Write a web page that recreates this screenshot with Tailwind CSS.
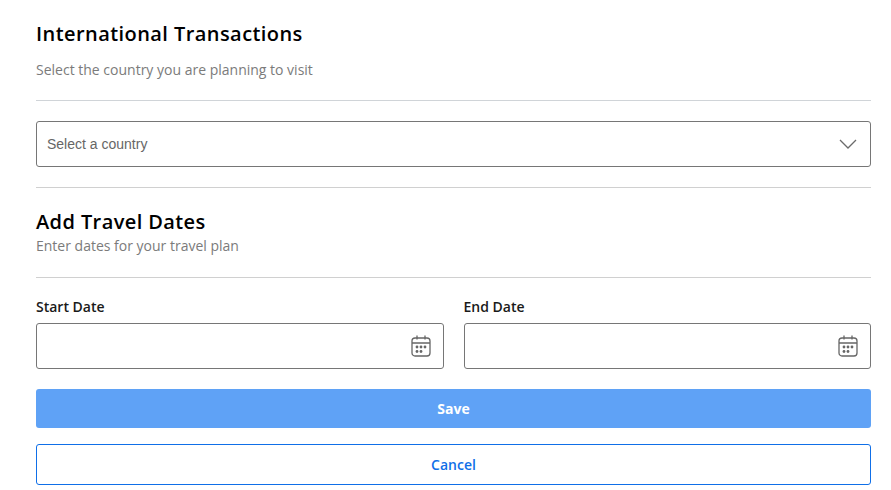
<!DOCTYPE html>
<html lang="en">
<head>
    <meta charset="UTF-8">
    <meta name="viewport" content="width=device-width, initial-scale=1.0">
    <title>International Transactions</title>
    <script src="https://cdn.jsdelivr.net/npm/@tailwindcss/browser@4"></script>
</head>
<body class="bg-white h-[490px] overflow-hidden font-['Open_Sans',sans-serif]">

    <div class="pl-9 pr-5 pt-5">

        <!-- Country -->
        <h2 class="text-xl leading-[28px] font-[550] tracking-[0.43px] text-black">International Transactions</h2>
        <p class="mt-[13px] text-sm leading-[18px] text-[#7b7b7b]">Select the country you are planning to visit</p>
        <div class="mt-[21px] h-px bg-[#d0d4d8]"></div>

        <div class="mt-5 h-[46px] flex items-center justify-between border border-[#767676] rounded-[3px] pl-[10px] pr-[13px]">
            <span class="font-['Liberation_Sans',sans-serif] text-sm text-[#666]">Select a country</span>
            <svg width="18" height="10" viewBox="0 0 18 10" fill="none" stroke="#6b6b6b" stroke-width="1.3"><path d="M1 1l8 8 8-8"/></svg>
        </div>
        <div class="mt-5 h-px bg-[#d0d0d0]"></div>

        <!-- Dates -->
        <h2 class="mt-5 text-xl leading-[28px] font-[550] tracking-[0.4px] text-black">Add Travel Dates</h2>
        <p class="mt-px text-sm leading-[18px] text-[#7b7b7b]">Enter dates for your travel plan</p>
        <div class="mt-[22px] h-px bg-[#d0d0d0]"></div>

        <div class="mt-5 grid grid-cols-2 gap-5">
            <div>
                <label class="block text-sm leading-[18px] font-[550] text-[#1a1a1a]">Start Date</label>
                <div class="mt-[7px] h-[46px] flex items-center justify-end border border-[#767676] rounded-[3px] pr-[12px]">
                    <svg width="20" height="22" viewBox="0 0 20 22" fill="none" stroke="#666" stroke-width="1.3"><rect x="1" y="3" width="18" height="18" rx="3"/><path d="M1 8h18M6 0.5v4M14 0.5v4"/><g fill="#666" stroke="none"><circle cx="6" cy="12" r="1.4"/><circle cx="10" cy="12" r="1.4"/><circle cx="14" cy="12" r="1.4"/><circle cx="6" cy="16.500" r="1.4"/><circle cx="10" cy="16.500" r="1.4"/></g></svg>
                </div>
            </div>
            <div>
                <label class="block text-sm leading-[18px] font-[550] text-[#1a1a1a]">End Date</label>
                <div class="mt-[7px] h-[46px] flex items-center justify-end border border-[#767676] rounded-[3px] pr-[12px]">
                    <svg width="20" height="22" viewBox="0 0 20 22" fill="none" stroke="#666" stroke-width="1.3"><rect x="1" y="3" width="18" height="18" rx="3"/><path d="M1 8h18M6 0.5v4M14 0.5v4"/><g fill="#666" stroke="none"><circle cx="6" cy="12" r="1.4"/><circle cx="10" cy="12" r="1.4"/><circle cx="14" cy="12" r="1.4"/><circle cx="6" cy="16.500" r="1.4"/><circle cx="10" cy="16.500" r="1.4"/></g></svg>
                </div>
            </div>
        </div>

        <!-- Buttons -->
        <button class="mt-5 block w-full h-[39px] rounded-[3px] bg-[#5fa2f6] text-white text-sm font-bold">Save</button>
        <button class="mt-4 block w-full h-[41px] rounded-[3px] bg-white border border-[#0f6fe8] text-[#0f6fe8] text-sm font-semibold">Cancel</button>
    </div>

</body>
</html>
